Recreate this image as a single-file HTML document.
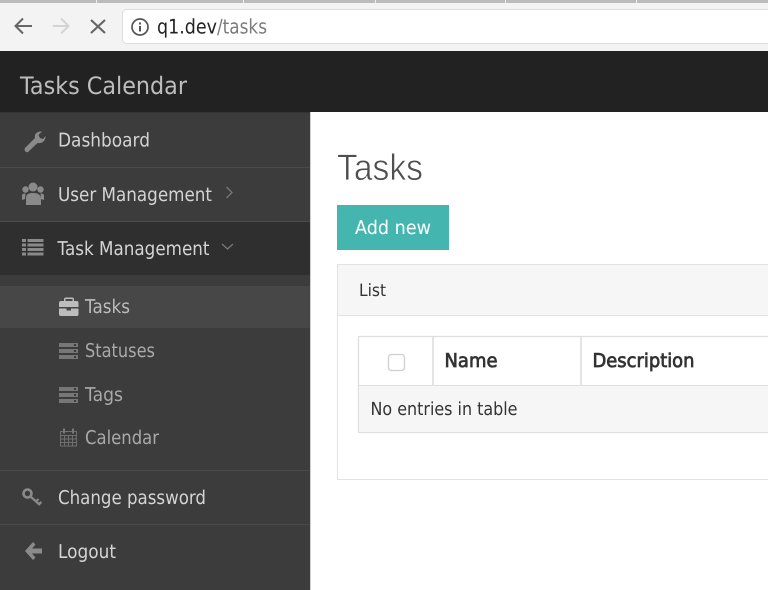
<!DOCTYPE html>
<html><head><meta charset="utf-8"><style>
html,body{margin:0;padding:0;width:768px;height:590px;overflow:hidden;background:#fff}
#w{position:relative;width:768px;height:590px;overflow:hidden}
svg{display:block;position:absolute;left:-10px;top:-10px;filter:blur(0.35px)}
text{font-family:"DejaVu Sans","Liberation Sans",sans-serif;text-rendering:geometricPrecision}
.m{font-size:19px;fill:#d4d4d4}
.s{font-size:19px;fill:#a9a9a9}
</style></head><body>
<div id="w">
<svg width="788" height="610" viewBox="-10 -10 788 610" xmlns="http://www.w3.org/2000/svg">
<rect x="-10" y="-10" width="788" height="610" fill="#fff"/>
<!-- browser chrome -->
<rect x="-10" y="-10" width="788" height="61" fill="#f3f3f3"/>
<rect x="-10" y="-10" width="788" height="13" fill="#bcbcbc"/>
<rect x="96" y="-10" width="1" height="13" fill="#eee"/><rect x="243" y="-10" width="1" height="13" fill="#eee"/><rect x="375" y="-10" width="1" height="13" fill="#eee"/><rect x="505" y="-10" width="1" height="13" fill="#eee"/><rect x="636" y="-10" width="1" height="13" fill="#eee"/>
<rect x="122.500" y="9.500" width="700" height="34" rx="4" fill="#fff" stroke="#dedede"/>
<path d="M32 26H16M23 18.500L15.500 26L23 33.500" fill="none" stroke="#666" stroke-width="2"/>
<path d="M53 26H68.500M61 18.500L68.500 26L61 33.500" fill="none" stroke="#d4d4d4" stroke-width="2"/>
<path d="M91 20L105 33M105 20L91 33" fill="none" stroke="#666" stroke-width="2.200"/>
<circle cx="140" cy="27" r="8" fill="none" stroke="#555" stroke-width="1.700"/>
<rect x="139" y="26" width="2" height="5.500" fill="#555"/><rect x="139" y="22.500" width="2" height="2" fill="#555"/>
<text x="157" y="33.500" font-size="20" fill="#222" textLength="60" lengthAdjust="spacingAndGlyphs">q1.dev</text>
<text x="217" y="33.500" font-size="20" fill="#7b7b7b" textLength="50" lengthAdjust="spacingAndGlyphs">/tasks</text>
<!-- header -->
<rect x="-10" y="51" width="788" height="61" fill="#222"/>
<text x="20" y="94" font-size="24" fill="#bdbdbd" textLength="167" lengthAdjust="spacingAndGlyphs">Tasks Calendar</text>
<!-- sidebar -->
<rect x="-10" y="112" width="320" height="488" fill="#3c3c3c"/>
<rect x="310" y="112" width="1" height="488" fill="#cfcfcf"/>
<rect x="-10" y="222" width="320" height="53" fill="#2f2f2f"/>
<rect x="-10" y="286" width="320" height="42" fill="#474747"/>
<rect x="-10" y="112" width="320" height="1" fill="#333"/>
<rect x="-10" y="167" width="320" height="1" fill="#4b4b4b"/>
<rect x="-10" y="221" width="320" height="1" fill="#4b4b4b"/>
<rect x="-10" y="470" width="320" height="1" fill="#4a4a4a"/>
<rect x="-10" y="524" width="320" height="1" fill="#4a4a4a"/>

<!-- wrench -->
<path d="M25 148L35 138C34 134 37 131 42 131.500L38.500 135L40 138L43 139L45.500 136C45.500 141 42 144 37.500 143L28 152C26 153 23.500 150 25 148Z" fill="#8a8a8a"/>
<text class="m" x="58" y="146.500" textLength="92" lengthAdjust="spacingAndGlyphs">Dashboard</text>
<!-- users -->
<g fill="#8a8a8a"><circle cx="33" cy="187" r="4.500"/><circle cx="25.500" cy="189.500" r="3.200"/><circle cx="40.500" cy="189.500" r="3.200"/><path d="M26 205V198C26 194 29 193 33 193S40 194 41 198V205Z"/><path d="M22 200V196C22 194 23 193.500 25.500 193.500L25 199Z"/><path d="M44 200V196C44 194 43 193.500 40.500 193.500L41 199Z"/></g>
<text class="m" x="58" y="201" textLength="154" lengthAdjust="spacingAndGlyphs">User Management</text>
<path d="M226.500 187L232 192.500L226.500 198" fill="none" stroke="#777" stroke-width="1.300"/>
<!-- list -->
<g fill="#8a8a8a"><rect x="22" y="239" width="4" height="3"/><rect x="27.500" y="239" width="16" height="3"/><rect x="22" y="243.500" width="4" height="3"/><rect x="27.500" y="243.500" width="16" height="3"/><rect x="22" y="248" width="4" height="3"/><rect x="27.500" y="248" width="16" height="3"/><rect x="22" y="252.500" width="4" height="3"/><rect x="27.500" y="252.500" width="16" height="3"/></g>
<text class="m" x="57.500" y="255" textLength="152" lengthAdjust="spacingAndGlyphs">Task Management</text>
<path d="M222 244L227.500 249L233 244" fill="none" stroke="#777" stroke-width="1.300"/>

<!-- briefcase -->
<path d="M59 303C59 301.500 60 301 61 301H64V299C64 298 65 297.500 66 297.500H72C73 297.500 74 298 74 299V301H77C78 301 78.500 301.500 78.500 303V307H59ZM65.500 301H72.500V299H65.500Z" fill="#bdbdbd" fill-rule="evenodd"/>
<path d="M59 308.500H66.500V310.500H71V308.500H78.500V314C78.500 315.500 78 316 77 316H61C60 316 59 315.500 59 314Z" fill="#bdbdbd"/>
<text class="s" x="85" y="313" style="fill:#bcbcbc" textLength="45" lengthAdjust="spacingAndGlyphs">Tasks</text>
<!-- server -->
<g fill="#777"><rect x="59" y="343" width="19" height="4"/><rect x="59" y="349" width="19" height="4"/><rect x="59" y="355" width="19" height="4"/></g>
<g fill="#3c3c3c"><rect x="74" y="344" width="2" height="2"/><rect x="74" y="350" width="2" height="2"/><rect x="74" y="356" width="2" height="2"/></g>
<text class="s" x="85" y="357" textLength="70" lengthAdjust="spacingAndGlyphs">Statuses</text>
<g fill="#777"><rect x="59" y="387" width="19" height="4"/><rect x="59" y="393" width="19" height="4"/><rect x="59" y="399" width="19" height="4"/></g>
<g fill="#3c3c3c"><rect x="74" y="388" width="2" height="2"/><rect x="74" y="394" width="2" height="2"/><rect x="74" y="400" width="2" height="2"/></g>
<text class="s" x="85" y="401" textLength="38" lengthAdjust="spacingAndGlyphs">Tags</text>
<!-- calendar -->
<g fill="none" stroke="#6f6f6f"><rect x="60.500" y="431.500" width="16" height="14.500"/><path d="M60.500 435.500H76.500M60.500 439H76.500M60.500 442.500H76.500M64.500 435.500V446M68.500 435.500V446M72.500 435.500V446"/></g>
<rect x="63" y="428.500" width="2" height="5" fill="#777"/><rect x="72" y="428.500" width="2" height="5" fill="#777"/>
<text class="s" x="85" y="444" textLength="74" lengthAdjust="spacingAndGlyphs">Calendar</text>

<!-- key -->
<circle cx="27.500" cy="493.500" r="4" fill="none" stroke="#8a8a8a" stroke-width="2.600"/>
<path d="M31 497L40 505M36 501.500L38.500 499M39 504L41.500 502" fill="none" stroke="#8a8a8a" stroke-width="2.200"/>
<text class="m" x="58" y="504" textLength="148" lengthAdjust="spacingAndGlyphs">Change password</text>
<!-- arrow -->
<path d="M33 542L25 551L33 560L35.500 557.500L32 553.500H42V548.500H32L35.500 544.500Z" fill="#8a8a8a"/>
<text class="m" x="58" y="558" textLength="58" lengthAdjust="spacingAndGlyphs">Logout</text>

<!-- content -->
<text x="337" y="180" font-size="37" fill="#4f4f4f" stroke="#fff" stroke-width="0.700" textLength="86" lengthAdjust="spacingAndGlyphs" style="font-family:'Liberation Sans',sans-serif">Tasks</text>
<rect x="337" y="205" width="112" height="45" fill="#45b6af"/>
<text x="355" y="234" font-size="19" fill="#fff" textLength="76" lengthAdjust="spacingAndGlyphs">Add new</text>

<!-- panel -->
<rect x="337.500" y="264.500" width="440" height="215" fill="#fff" stroke="#e2e2e2"/>
<rect x="338" y="265" width="440" height="50" fill="#f6f6f6"/>
<rect x="338" y="315" width="440" height="1" fill="#e2e2e2"/>
<text x="359" y="296" font-size="17" fill="#333" textLength="27" lengthAdjust="spacingAndGlyphs">List</text>

<!-- table -->
<rect x="358.500" y="336.500" width="430" height="96" fill="#fff" stroke="#dfdfdf" stroke-width="1.300"/>
<rect x="359" y="386" width="419" height="46" fill="#f6f6f6"/>
<rect x="359" y="385" width="419" height="1" fill="#dfdfdf"/>
<rect x="432" y="337" width="2" height="48" fill="#e4e4e4"/>
<rect x="580" y="337" width="2" height="48" fill="#e4e4e4"/>
<rect x="388.500" y="354.500" width="16" height="16" rx="3" fill="#fff" stroke="#cfcfcf" stroke-width="1.300"/>
<text x="444.500" y="367" font-size="19" fill="#333" stroke="#333" stroke-width="0.750" textLength="53" lengthAdjust="spacingAndGlyphs">Name</text>
<text x="592.500" y="367" font-size="19" fill="#333" stroke="#333" stroke-width="0.750" textLength="102" lengthAdjust="spacingAndGlyphs">Description</text>
<text x="370.500" y="415" font-size="18" fill="#333" textLength="147" lengthAdjust="spacingAndGlyphs">No entries in table</text>
</svg>
</div>
</body></html>
